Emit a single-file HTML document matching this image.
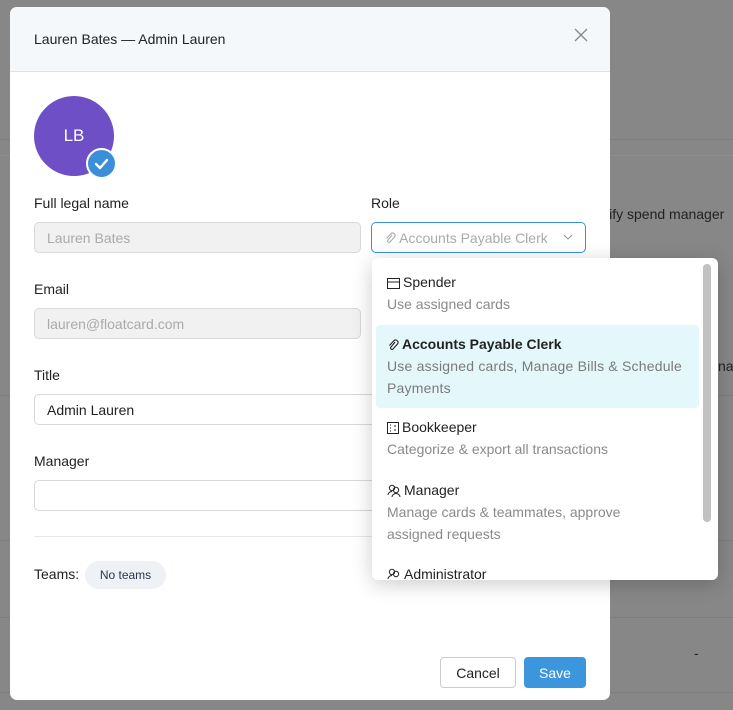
<!DOCTYPE html><html><head><style>
*{box-sizing:border-box;margin:0;padding:0}
body{width:733px;height:710px;background:#878787;font-family:"Liberation Sans",sans-serif;position:relative;overflow:hidden;color:#222}
.bl{position:absolute;left:0;right:0;height:1px;background:#7d7d7d}
.bg{position:absolute;font-size:14px;color:#222}
.modal{position:absolute;left:10px;top:7px;width:600px;height:693px;background:#fff;border-radius:7px;overflow:hidden}
.hdr{height:65px;background:#f4f8fb;border-bottom:1px solid #dfe4e8;padding:24px 24px;font-size:14px}
.av{position:absolute;left:24px;top:89px;width:80px;height:80px;border-radius:50%;background:#6f4fc6;color:#fff;font-size:17px;display:flex;align-items:center;justify-content:center}
.chk{position:absolute;left:76px;top:141px;width:31px;height:31px;border-radius:50%;background:#3b8fd9;border:2px solid #fff}
.lab{position:absolute;font-size:14px}
.inp{position:absolute;height:31px;border:1px solid #d8d8d8;border-radius:5px;font-size:14px;padding:7px 12px;color:#222}
.dis{background:#f1f1f1;color:#aaa}
.dd{position:absolute;left:372px;top:258px;width:346px;height:322px;background:#fff;border-radius:6px;box-shadow:0 4px 20px rgba(0,0,0,.2);overflow:hidden}
.it{position:absolute;left:15px;font-size:14px;line-height:22px}
.t{color:#222}.d{color:#8a8a8a}
.t svg{vertical-align:-2px;margin-right:3px}
.btn{position:absolute;top:650px;height:31px;border-radius:4px;font-size:14px;display:flex;align-items:center;justify-content:center}
</style></head><body>
<div class="bl" style="top:139px"></div><div class="bl" style="top:155px;background:#8d8d8d"></div>
<div class="bl" style="top:395px"></div><div class="bl" style="top:540px"></div><div class="bl" style="top:617px"></div><div class="bl" style="top:692px"></div>
<div class="bg" style="left:606px;top:206px">lify spend manager</div>
<div class="bg" style="left:718px;top:358px">na</div>
<div class="bg" style="left:694px;top:645px">-</div>
<div class="modal">
<div class="hdr">Lauren Bates — Admin Lauren</div>
<svg style="position:absolute;right:22px;top:21px" width="14" height="14" viewBox="0 0 14 14"><path d="M1 1l12 12M13 1L1 13" stroke="#888" stroke-width="1.3"/></svg>
<div class="av">LB</div>
<div class="chk"><svg width="27" height="27" viewBox="0 0 27 27"><path d="M8 14l4 4 7-8" stroke="#fff" stroke-width="2.4" fill="none" stroke-linecap="round" stroke-linejoin="round"/></svg></div>
<div class="lab" style="left:24px;top:188px">Full legal name</div>
<div class="lab" style="left:361px;top:188px">Role</div>
<div class="inp dis" style="left:24px;top:215px;width:327px">Lauren Bates</div>
<div class="inp" style="left:361px;top:215px;width:215px;border-color:#3b8fd9;color:#aaa;padding-left:12px"><svg width="12" height="12" viewBox="0 0 12 12" style="vertical-align:-1px"><path d="M8 3L4 8a1.4 1.4 0 002 2l4.5-5a2.5 2.5 0 00-3.5-3.5L2.5 6.5" stroke="#aaa" fill="none" stroke-width="1.1"/></svg> Accounts Payable Clerk <svg style="position:absolute;right:12px;top:11px" width="10" height="6" viewBox="0 0 10 6"><path d="M1 1l4 4 4-4" stroke="#999" fill="none"/></svg></div>
<div class="lab" style="left:24px;top:274px">Email</div>
<div class="inp dis" style="left:24px;top:301px;width:327px">lauren@floatcard.com</div>
<div class="lab" style="left:24px;top:360px">Title</div>
<div class="inp" style="left:24px;top:387px;width:360px">Admin Lauren</div>
<div class="lab" style="left:24px;top:446px">Manager</div>
<div class="inp" style="left:24px;top:473px;width:360px"></div>
<div style="position:absolute;left:24px;top:529px;width:552px;height:1px;background:#e6e6e6"></div>
<div class="lab" style="left:24px;top:559px">Teams:</div>
<div style="position:absolute;left:75px;top:554px;width:81px;height:28px;border-radius:14px;background:#eef1f5;font-size:12px;color:#2a3550;display:flex;align-items:center;justify-content:center">No teams</div>
<div class="btn" style="left:430px;width:76px;border:1px solid #ccc;color:#222">Cancel</div>
<div class="btn" style="left:514px;width:62px;background:#3b96dd;color:#fff">Save</div>
</div>
<div class="dd">
<div style="position:absolute;left:4px;top:67px;width:323px;height:83px;background:#e4f8fc;border-radius:4px"></div>
<div style="position:absolute;left:331px;top:6px;width:8px;height:258px;background:#c1c1c1;border-radius:4px"></div>
<div class="it" style="top:13px"><div class="t"><svg width="13" height="11" viewBox="0 0 13 11"><rect x=".5" y=".5" width="12" height="10" fill="none" stroke="#222"/><path d="M.5 4h12" stroke="#222"/></svg>Spender</div><div class="d">Use assigned cards</div></div>
<div class="it" style="top:75px"><div class="t" style="font-weight:bold"><svg width="12" height="12" viewBox="0 0 12 12"><path d="M8 3L4 8a1.4 1.4 0 002 2l4.5-5a2.5 2.5 0 00-3.5-3.5L2.5 6.5" stroke="#222" fill="none" stroke-width="1.1"/></svg>Accounts Payable Clerk</div><div class="d" style="color:#7a7a7a;letter-spacing:.2px">Use assigned cards, Manage Bills &amp; Schedule<br>Payments</div></div>
<div class="it" style="top:158px"><div class="t"><svg width="12" height="12" viewBox="0 0 12 12"><rect x=".5" y=".5" width="11" height="11" fill="none" stroke="#222"/><path d="M3 3h1M3 6h1M3 9h1M7 4h2M7 8h2" stroke="#222"/></svg>Bookkeeper</div><div class="d">Categorize &amp; export all transactions</div></div>
<div class="it" style="top:221px"><div class="t"><svg width="14" height="13" viewBox="0 0 14 13"><circle cx="5" cy="4" r="2.7" fill="none" stroke="#222"/><circle cx="9" cy="6" r="2.7" fill="none" stroke="#222"/><path d="M1 11c0-2 2-3.5 4-3.5M5 13c0-2 2-3.5 4-3.5s4 1.5 4 3.5" fill="none" stroke="#222"/></svg>Manager</div><div class="d">Manage cards &amp; teammates, approve<br>assigned requests</div></div>
<div class="it" style="top:305px"><div class="t"><svg width="14" height="13" viewBox="0 0 14 13"><circle cx="5" cy="4" r="2.7" fill="none" stroke="#222"/><circle cx="9" cy="6" r="2.7" fill="none" stroke="#222"/><path d="M1 11c0-2 2-3.5 4-3.5" fill="none" stroke="#222"/></svg>Administrator</div></div>
</div>
</body></html>
